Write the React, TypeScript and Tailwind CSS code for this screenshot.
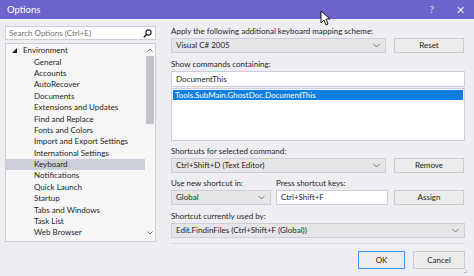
import React from "react";

const font = { fontFamily: "Lato, 'Noto Sans', sans-serif" };

function Chevron() {
  return (
    <svg width="7" height="5" viewBox="0 0 7 5" className="shrink-0">
      <path d="M0.5 1 L3.5 4 L6.5 1" fill="none" stroke="#707070" strokeWidth="0.9" />
    </svg>
  );
}

function Dropdown({ text, className }: { text: string; className: string }) {
  return (
    <div className={`flex items-center justify-between border border-[#cccedb] bg-[#e6e6e8] pl-[4px] pr-[5px] text-[#1e1e1e] ${className}`}>
      <span>{text}</span>
      <Chevron />
    </div>
  );
}

function Button({ text, className }: { text: string; className: string }) {
  return (
    <div className={`flex items-center justify-center border border-[#cccccc] bg-[#ececec] text-[#1e1e1e] ${className}`}>
      {text}
    </div>
  );
}

const items = [
  "General",
  "Accounts",
  "AutoRecover",
  "Documents",
  "Extensions and Updates",
  "Find and Replace",
  "Fonts and Colors",
  "Import and Export Settings",
  "International Settings",
  "Keyboard",
  "Notifications",
  "Quick Launch",
  "Startup",
  "Tabs and Windows",
  "Task List",
  "Web Browser",
];

export default function App() {
  return (
    <div className="relative h-[276px] w-[474px] overflow-hidden bg-[#eeeef2] text-[8px] leading-[11px]" style={font}>
      {/* title bar */}
      <div className="flex h-[19px] items-center bg-[#6c64cc] pl-[7px] pr-[9px] text-[9.5px] text-white">
        <span className="flex-1">Options</span>
        <span className="mr-[22px] text-[10px] text-[#d8d6f3]">?</span>
        <span className="text-[11px] text-[#e8e7f8]">✕</span>
      </div>

      <div className="flex">
        {/* left column */}
        <div className="ml-[5px] flex w-[151px] flex-col">
          <div className="mt-[7px] flex h-[14px] items-center justify-between border border-[#cccedb] bg-white pl-[3px] pr-[3px] text-[#717171]">
            <span>Search Options (Ctrl+E)</span>
            <svg width="9" height="9" viewBox="0 0 9 9">
              <circle cx="5.5" cy="3.5" r="2.6" fill="none" stroke="#1e1e1e" strokeWidth="1.1" />
              <path d="M3.6 5.4 L0.8 8.2" stroke="#1e1e1e" strokeWidth="1.4" />
            </svg>
          </div>
          <div className="mt-[3px] flex h-[199px] border border-[#cccedb] bg-[#f6f6f6]">
            <div className="flex flex-1 flex-col overflow-hidden pt-[1px] text-[#1e1e1e]">
              <div className="flex h-[11.4px] shrink-0 items-center pl-[6px]">
                <svg width="5" height="5" viewBox="0 0 5 5" className="mr-[6px]">
                  <path d="M5 0 L5 5 L0 5 Z" fill="#1e1e1e" />
                </svg>
                <span>Environment</span>
              </div>
              {items.map((t) => (
                <div
                  key={t}
                  className={`flex h-[11.4px] shrink-0 items-center pl-[28px] ${t === "Keyboard" ? "bg-[#cccedb]" : ""}`}
                >
                  {t}
                </div>
              ))}
              <div className="flex h-[11.4px] shrink-0 items-center pl-[22px]">Projects and Solutions</div>
            </div>
            <div className="flex w-[10px] flex-col items-center bg-[#f6f6f6]">
              <svg width="6" height="4" viewBox="0 0 6 4" className="mt-[4px]">
                <path d="M0.5 3.5 L3 1 L5.5 3.5" fill="none" stroke="#606060" strokeWidth="0.9" />
              </svg>
              <div className="mt-[4px] h-[68px] w-[8px] bg-[#c2c3c9]" />
              <div className="flex-1" />
              <svg width="6" height="4" viewBox="0 0 6 4" className="mb-[6px]">
                <path d="M0.5 0.5 L3 3 L5.5 0.5" fill="none" stroke="#606060" strokeWidth="0.9" />
              </svg>
            </div>
          </div>
        </div>

        {/* right column */}
        <div className="ml-[15px] flex w-[294px] flex-col text-[#1e1e1e]">
          <div className="mt-[7px] h-[11px]">Apply the following additional keyboard mapping scheme:</div>
          <div className="mt-[1px] flex h-[15px] gap-[8px]">
            <Dropdown text="Visual C# 2005" className="w-[215px]" />
            <Button text="Reset" className="w-[70px]" />
          </div>
          <div className="mt-[6px] h-[11px]">Show commands containing:</div>
          <div className="mt-[1px] flex h-[16px] items-center border border-[#cccedb] bg-white pl-[4px]">DocumentThis</div>
          <div className="mt-[1px] h-[53px] border border-[#cccedb] bg-white p-[1px]">
            <div className="flex h-[10px] items-center bg-[#0f7ee0] pl-[2px] text-white">
              Tools.SubMain.GhostDoc.DocumentThis
            </div>
          </div>
          <div className="mt-[5px] h-[11px]">Shortcuts for selected command:</div>
          <div className="mt-[1px] flex h-[15px] gap-[8px]">
            <Dropdown text="Ctrl+Shift+D (Text Editor)" className="w-[215px]" />
            <Button text="Remove" className="w-[70px]" />
          </div>
          <div className="mt-[5px] flex h-[11px]">
            <span className="w-[105px]">Use new shortcut in:</span>
            <span>Press shortcut keys:</span>
          </div>
          <div className="mt-[1px] flex h-[15px]">
            <Dropdown text="Global" className="w-[100px]" />
            <div className="ml-[5px] flex w-[112px] items-center border border-[#cccedb] bg-white pl-[4px]">Ctrl+Shift+F</div>
            <Button text="Assign" className="ml-[6px] w-[70px]" />
          </div>
          <div className="mt-[6px] h-[11px]">Shortcut currently used by:</div>
          <Dropdown text="Edit.FindinFiles (Ctrl+Shift+F (Global))" className="mt-[1px] h-[15px] w-[294px]" />
          <div className="mt-[5px] h-px bg-[#d6d6dc]" />
        </div>
      </div>

      {/* bottom buttons */}
      <div className="mt-[7px] flex justify-end gap-[8px] pr-[9px]">
        <div className="flex h-[18px] w-[47px] items-center justify-center border border-[#3399ff] bg-[#ececec] text-[#1e1e1e]">OK</div>
        <Button text="Cancel" className="h-[18px] w-[52px]" />
      </div>

      {/* resize grip */}
      <div className="absolute bottom-[3px] right-[7px] grid grid-cols-2 gap-[1px]">
        <div className="h-px w-px" />
        <div className="h-px w-px bg-[#a0a0a0]" />
        <div className="h-px w-px bg-[#a0a0a0]" />
        <div className="h-px w-px bg-[#a0a0a0]" />
      </div>

      {/* mouse cursor */}
      <svg className="absolute left-[320px] top-[10px]" width="11" height="16" viewBox="0 0 11 16">
        <path d="M1 1 L1 13 L4 10 L6 15 L8 14 L6 9 L10 9 Z" fill="white" stroke="black" strokeWidth="0.9" strokeLinejoin="round" />
      </svg>
    </div>
  );
}
